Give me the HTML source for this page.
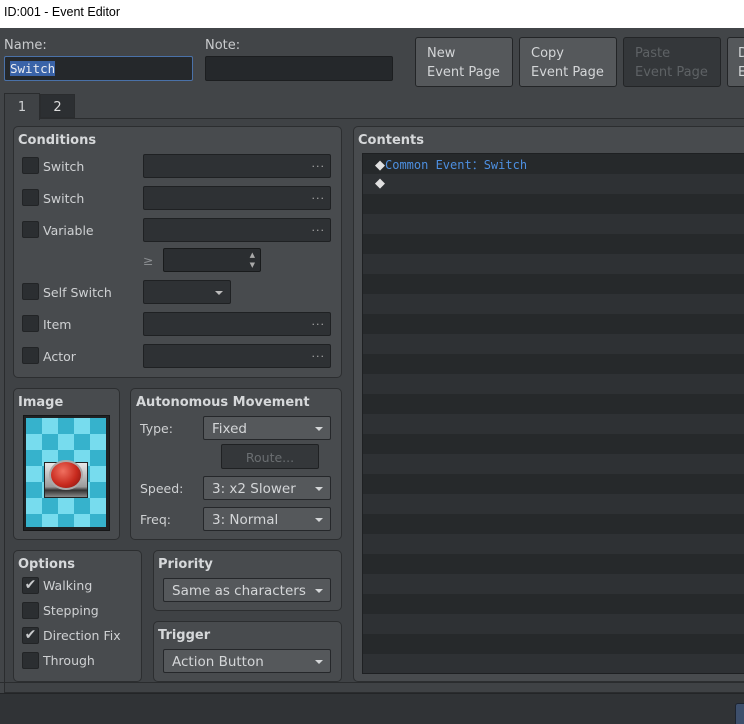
<!DOCTYPE html>
<html style="overflow:hidden;width:744px;height:724px"><head><meta charset="utf-8"><style>
*{box-sizing:border-box;margin:0;padding:0}
body{width:744px;height:724px;overflow:hidden;background:#424548;font-family:"DejaVu Sans","Liberation Sans",sans-serif;font-size:12.5px;color:#cfd1d3;position:relative}
.a{position:absolute}
.tb{left:0;top:0;width:744px;height:28px;background:#fff;color:#000;font-size:12.5px;padding:5px 4px;font-family:"Liberation Sans",sans-serif}
.lbl{color:#c9cbcd}
.inp{background:#25282b;border:1px solid #1c1e20;border-radius:2px}
.btn{background:#55585b;border:1px solid #232527;border-radius:3px;color:#d4d6d8;padding:6px 11px;line-height:19px;font-size:13px}
.btn.dis{background:#34373a;color:#5e6265}
.grp{background:#484b4e;border:1px solid #2c2e30;border-radius:5px}
.gt{font-weight:bold;color:#d6d8da;font-size:13px}
.cb{width:17px;height:17px;background:#2b2e31;border:1px solid #222426;border-radius:2px;color:#c9cbcd;font-size:14px;line-height:15px;text-align:center}
.fld{background:#2e3134;border:1px solid #1f2123;border-radius:2px;height:24px}
.dots{position:absolute;right:5px;top:5px;font-size:11px;color:#aaa;letter-spacing:1px}
.cmb{background:#55585b;border:1px solid #25272a;border-radius:2px;height:24px;padding:4px 8px;color:#d4d6d8;font-size:13.5px}
.cmb:after{content:"";position:absolute;right:7px;top:10px;border-left:4px solid transparent;border-right:4px solid transparent;border-top:4px solid #d4d6d8}
.t{margin-top:1px}
</style></head><body>
<div class="a tb">ID:001 - Event Editor</div>
<div class="a lbl" style="left:4px;top:38px;font-size:13px">Name:</div>
<div class="a inp" style="left:4px;top:56px;width:189px;height:25px;border:1px solid #4a71a8"><span style="position:absolute;left:5px;top:4px;background:#3a63a8;color:#e8eaf0;font-family:'DejaVu Sans Mono',monospace;font-size:12.5px;line-height:15px">Switch</span></div>
<div class="a lbl" style="left:205px;top:38px;font-size:13px">Note:</div>
<div class="a inp" style="left:205px;top:56px;width:188px;height:25px"></div>
<div class="a btn" style="left:415px;top:37px;width:98px;height:50px">New<br>Event Page</div>
<div class="a btn" style="left:519px;top:37px;width:98px;height:50px">Copy<br>Event Page</div>
<div class="a btn dis" style="left:623px;top:37px;width:98px;height:50px">Paste<br>Event Page</div>
<div class="a btn" style="left:727px;top:37px;width:40px;height:50px;padding-left:10px">D<br>E</div>
<div class="a" style="left:4px;top:118px;width:750px;height:575px;border:1px solid #2a2c2e;background:#3f4245"></div>
<div class="a" style="left:4px;top:93px;width:36px;height:27px;background:#3f4245;border:1px solid #2a2c2e;border-bottom:none;text-align:center;padding-top:6px;font-size:13px">1</div>
<div class="a" style="left:40px;top:94px;width:35px;height:24px;background:#2c2f32;border:1px solid #2a2c2e;text-align:center;padding-top:5px;font-size:13px;color:#ddd">2</div>
<div class="a" style="left:0;top:693px;width:744px;height:31px;background:#303336;border-top:1px solid #232527"></div>
<div class="a" style="left:0;top:682px;width:744px;height:1px;background:#2a2c2e"></div>
<div class="a" style="left:735px;top:703px;width:20px;height:21px;background:#3d4f6c;border:1px solid #1d2430;border-bottom:none;border-radius:3px 3px 0 0"></div>
<div class="a grp" style="left:13px;top:126px;width:329px;height:252px"></div>
<div class="a gt" style="left:18px;top:133px">Conditions</div>
<div class="a cb" style="left:22px;top:157px"></div><div class="a t" style="left:43px;top:158px">Switch</div><div class="a fld" style="left:143px;top:154px;width:188px"><span class="dots">···</span></div>
<div class="a cb" style="left:22px;top:189px"></div><div class="a t" style="left:43px;top:190px">Switch</div><div class="a fld" style="left:143px;top:186px;width:188px"><span class="dots">···</span></div>
<div class="a cb" style="left:22px;top:221px"></div><div class="a t" style="left:43px;top:222px">Variable</div><div class="a fld" style="left:143px;top:218px;width:188px"><span class="dots">···</span></div>
<div class="a" style="left:143px;top:253px;color:#8a8d90">≥</div>
<div class="a fld" style="left:163px;top:248px;width:98px;background:#2b2e31;border-color:#191b1c"><span class="a" style="right:5px;top:1px;font-size:7px;line-height:10px;color:#aaa">▲<br>▼</span></div>
<div class="a cb" style="left:22px;top:283px"></div><div class="a t" style="left:43px;top:284px">Self Switch</div><div class="a fld" style="left:143px;top:280px;width:88px"><span class="a" style="right:7px;top:10px;border-left:4px solid transparent;border-right:4px solid transparent;border-top:4px solid #bbb"></span></div>
<div class="a cb" style="left:22px;top:315px"></div><div class="a t" style="left:43px;top:316px">Item</div><div class="a fld" style="left:143px;top:312px;width:188px"><span class="dots">···</span></div>
<div class="a cb" style="left:22px;top:347px"></div><div class="a t" style="left:43px;top:348px">Actor</div><div class="a fld" style="left:143px;top:344px;width:188px"><span class="dots">···</span></div>
<div class="a grp" style="left:353px;top:126px;width:400px;height:556px"></div>
<div class="a gt" style="left:358px;top:133px">Contents</div>
<div class="a" style="left:362px;top:153px;width:390px;height:521px;border:1px solid #1e2022;background:repeating-linear-gradient(#26292b 0 20px,#2e3134 20px 40px)"></div>
<div class="a" style="left:375px;top:156px;color:#e0e0e0;font-size:13px">◆<span style="font-family:'DejaVu Sans Mono',monospace;color:#4d8fe0;font-size:12px">Common Event：Switch</span></div>
<div class="a" style="left:375px;top:176px;color:#e0e0e0;font-size:13px">◆</div>
<div class="a grp" style="left:13px;top:388px;width:107px;height:152px"></div>
<div class="a gt" style="left:18px;top:395px">Image</div>
<div class="a" style="left:23px;top:415px;width:87px;height:116px;background:#1f2224;border:1px solid #151617"></div>
<div class="a" style="left:26px;top:418px;width:80px;height:109px;background:conic-gradient(#77dcee 0 25%,#36b2cc 0 50%,#77dcee 0 75%,#36b2cc 0);background-size:32px 32px;background-position:-16px -16px"></div>
<div class="a" style="left:44px;top:462px;width:44px;height:36px;background:linear-gradient(#e8e8e8,#9a9a9a 70%,#333 80%,#888);border:1px solid #222"></div>
<div class="a" style="left:49px;top:460px;width:34px;height:30px;border-radius:50%;background:radial-gradient(circle at 40% 35%,#f07060,#c82a1e 55%,#7a100c);border:2px solid #aaa"></div>
<div class="a grp" style="left:130px;top:388px;width:212px;height:152px"></div>
<div class="a gt" style="left:136px;top:395px">Autonomous Movement</div>
<div class="a" style="left:140px;top:421px">Type:</div>
<div class="a cmb" style="left:203px;top:416px;width:128px">Fixed</div>
<div class="a" style="left:221px;top:444px;width:98px;height:25px;background:#34373a;border:1px solid #1f2123;border-radius:2px;color:#6a6e71;text-align:center;padding-top:5px">Route...</div>
<div class="a" style="left:140px;top:481px">Speed:</div>
<div class="a cmb" style="left:203px;top:476px;width:128px">3: x2 Slower</div>
<div class="a" style="left:140px;top:512px">Freq:</div>
<div class="a cmb" style="left:203px;top:507px;width:128px">3: Normal</div>
<div class="a grp" style="left:13px;top:550px;width:129px;height:132px"></div>
<div class="a gt" style="left:18px;top:557px">Options</div>
<div class="a cb" style="left:22px;top:577px">✔</div><div class="a" style="left:43px;top:578px">Walking</div>
<div class="a cb" style="left:22px;top:602px"></div><div class="a" style="left:43px;top:603px">Stepping</div>
<div class="a cb" style="left:22px;top:627px">✔</div><div class="a" style="left:43px;top:628px">Direction Fix</div>
<div class="a cb" style="left:22px;top:652px"></div><div class="a" style="left:43px;top:653px">Through</div>
<div class="a grp" style="left:153px;top:550px;width:189px;height:61px"></div>
<div class="a gt" style="left:158px;top:557px">Priority</div>
<div class="a cmb" style="left:163px;top:578px;width:168px">Same as characters</div>
<div class="a grp" style="left:153px;top:621px;width:189px;height:61px"></div>
<div class="a gt" style="left:158px;top:628px">Trigger</div>
<div class="a cmb" style="left:163px;top:649px;width:168px">Action Button</div>
</body></html>
